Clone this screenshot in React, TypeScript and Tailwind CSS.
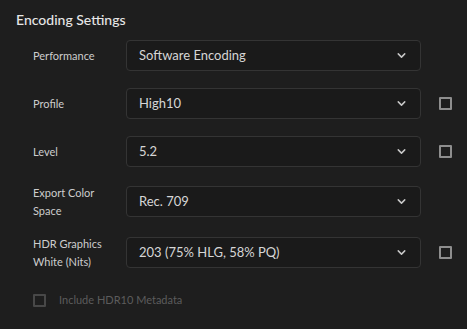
import { ChevronDown } from "lucide-react";

interface Row {
  label: string[];
  value: string;
  check: boolean;
  mt: string;
}

const rows: Row[] = [
  { label: ["Performance"], value: "Software Encoding", check: false, mt: "mt-[10px]" },
  { label: ["Profile"], value: "High10", check: true, mt: "mt-[17px]" },
  { label: ["Level"], value: "5.2", check: true, mt: "mt-[17px]" },
  { label: ["Export Color", "Space"], value: "Rec. 709", check: false, mt: "mt-[19px]" },
  { label: ["HDR Graphics", "White (Nits)"], value: "203 (75% HLG, 58% PQ)", check: true, mt: "mt-[20px]" },
];

export default function App() {
  return (
    <div className="min-h-[329px] w-[467px] bg-[#1e1e1e] font-['Lato','Liberation_Sans',sans-serif] select-none">
      <div className="px-4 pt-[10px]">
        <h1 className="h-5 text-[14px] leading-5 font-medium text-[#e6e6e6]">Encoding Settings</h1>
      </div>

      <div className="pl-[33px]">
        {rows.map((row) => (
          <div key={row.value} className={`${row.mt} flex h-[31px] items-center`}>
            <div className="w-[93px] text-[11px] leading-[18px] text-[#cdcdcd]">
              {row.label.map((l) => (
                <div key={l}>{l}</div>
              ))}
            </div>
            <div className="flex h-[31px] w-[295px] items-center justify-between rounded-[4px] border border-[#343434] bg-[#1a1a1a] pl-3 pr-3">
              <span className="text-[13px] text-[#d6d6d6]">{row.value}</span>
              <ChevronDown size={13} strokeWidth={2.75} className="text-[#c8c8c8]" />
            </div>
            {row.check && (
              <div className="ml-[18px] h-[13px] w-[13px] rounded-[1px] border-2 border-[#8e8e8e]" />
            )}
          </div>
        ))}

        <div className="mt-[24px] flex items-center gap-[13px]">
          <div className="h-[13px] w-[13px] rounded-[1px] border-2 border-[#484848]" />
          <span className="text-[11px] text-[#5c5c5c]">Include HDR10 Metadata</span>
        </div>
      </div>
    </div>
  );
}
